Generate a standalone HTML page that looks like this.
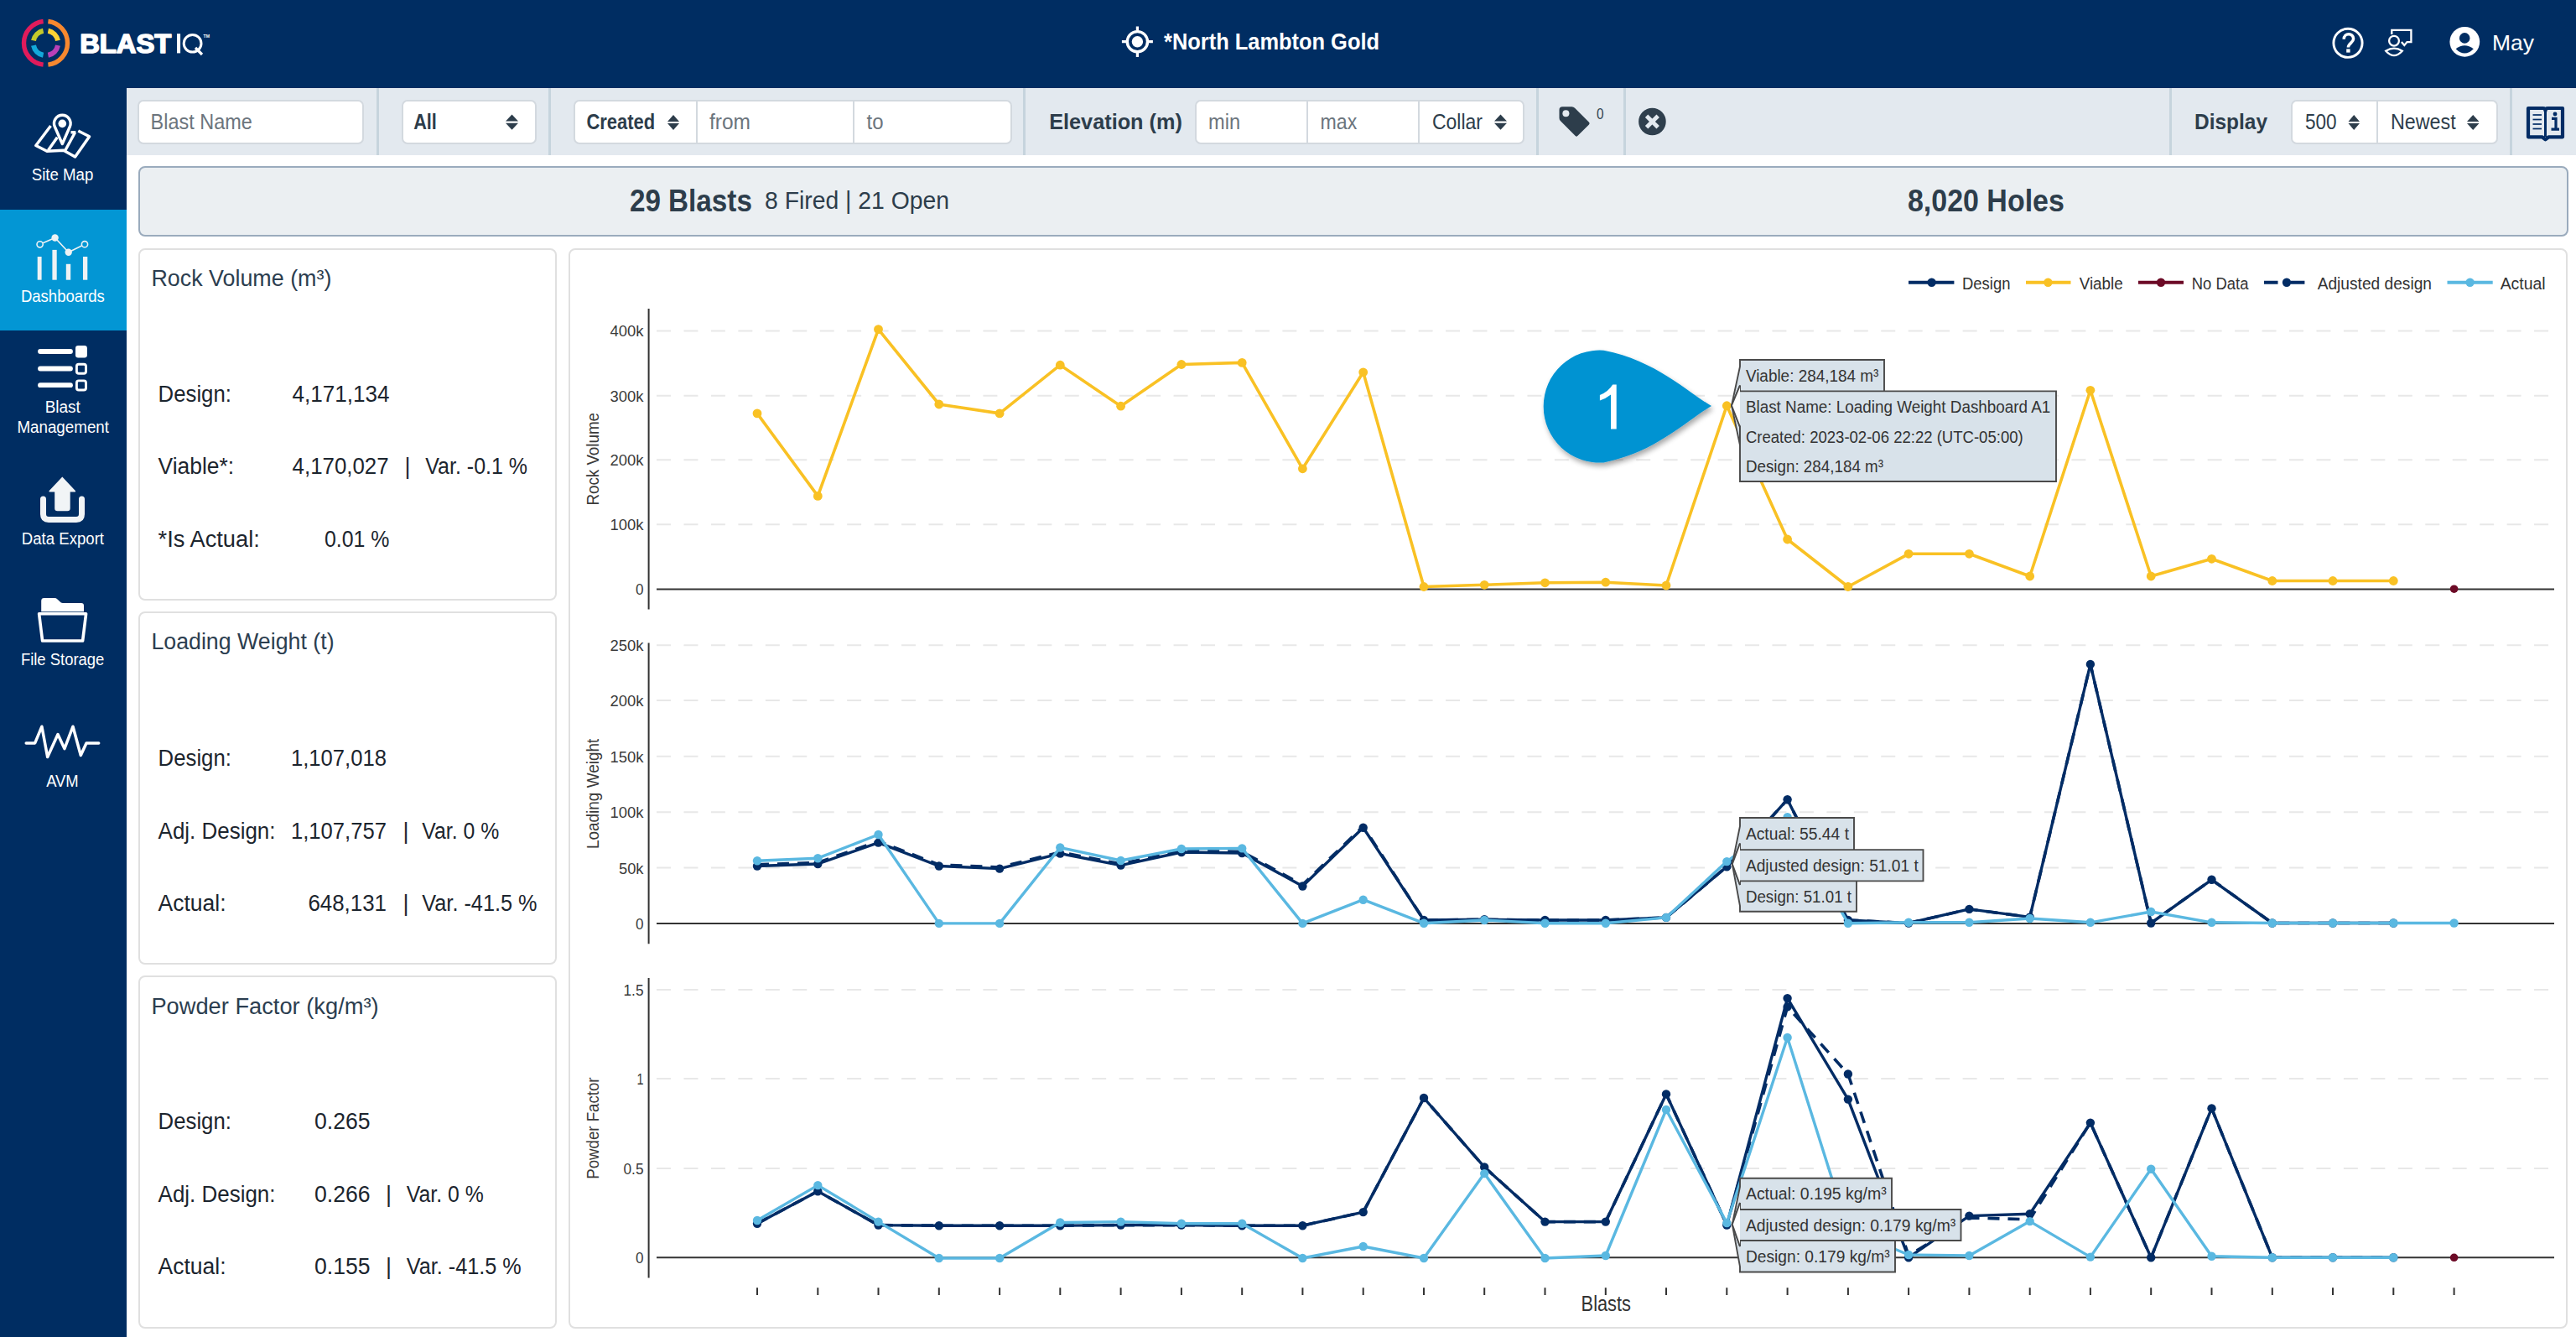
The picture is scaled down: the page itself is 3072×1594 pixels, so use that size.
<!DOCTYPE html>
<html><head><meta charset="utf-8"><title>BlastIQ Dashboards</title>
<style>
html,body{margin:0;padding:0;}
body{width:3072px;height:1594px;overflow:hidden;position:relative;background:#fff;font-family:"Liberation Sans", sans-serif;}
.abs{position:absolute;box-sizing:border-box;}
#hdr{left:0;top:0;width:3072px;height:105px;background:#002d62;}
#side{left:0;top:105px;width:151px;height:1489px;background:#002d62;}
#act{left:0;top:250px;width:151px;height:144px;background:#0396d4;}
#fbar{left:151px;top:105px;width:2921px;height:80px;background:#e3e9ef;}
.sep{top:105px;width:3px;height:80px;background:#c6d4dd;}
.inp{background:#fff;border:2px solid #d3d9df;border-radius:7px;}
.vsep{width:2px;background:#d3d9df;}
#summ{left:164.5px;top:198px;width:2898px;height:84px;background:#ebeff2;border:2px solid #9aabbd;border-radius:8px;}
.card{background:#fff;border:2px solid #e0e0e0;border-radius:8px;}
svg{position:absolute;left:0;top:0;}
</style></head><body>
<div class="abs" id="hdr"></div>
<div class="abs" id="side"></div>
<div class="abs" id="act"></div>
<div class="abs" id="fbar"></div>
<div class="abs sep" style="left:449px"></div>
<div class="abs sep" style="left:654px"></div>
<div class="abs sep" style="left:1220px"></div>
<div class="abs sep" style="left:1832px"></div>
<div class="abs sep" style="left:1936px"></div>
<div class="abs sep" style="left:2587px"></div>
<div class="abs sep" style="left:2993px"></div>
<div class="abs inp" style="left:164px;top:119px;width:270px;height:53px"></div>
<div class="abs inp" style="left:479px;top:119px;width:161px;height:53px"></div>
<div class="abs inp" style="left:684px;top:119px;width:523px;height:53px"></div>
<div class="abs vsep" style="left:830px;top:121px;height:49px"></div>
<div class="abs vsep" style="left:1017px;top:121px;height:49px"></div>
<div class="abs inp" style="left:1425px;top:119px;width:393px;height:53px"></div>
<div class="abs vsep" style="left:1558px;top:121px;height:49px"></div>
<div class="abs vsep" style="left:1691px;top:121px;height:49px"></div>
<div class="abs inp" style="left:2732px;top:119px;width:247px;height:53px"></div>
<div class="abs vsep" style="left:2834px;top:121px;height:49px"></div>
<div class="abs" id="summ"></div>
<div class="abs card" style="left:165px;top:296px;width:499px;height:420px"></div>
<div class="abs card" style="left:165px;top:729px;width:499px;height:421px"></div>
<div class="abs card" style="left:165px;top:1163px;width:499px;height:421px"></div>
<div class="abs card" style="left:678px;top:296px;width:2384px;height:1288px"></div>

<svg width="3072" height="1594" viewBox="0 0 3072 1594" font-family='"Liberation Sans", sans-serif'>
<path d="M57.40,25.46 A26.0,26.0 0 0 1 57.40,77.14" fill="none" stroke="#f7882f" stroke-width="5.4"/>
<path d="M51.60,77.14 A26.0,26.0 0 0 1 51.60,25.46" fill="none" stroke="#e11b5b" stroke-width="5.4"/>
<path d="M57.40,36.79 A14.8,14.8 0 0 1 69.01,48.40" fill="none" stroke="#fdd334" stroke-width="6"/>
<path d="M69.01,54.20 A14.8,14.8 0 0 1 57.40,65.81" fill="none" stroke="#b940b8" stroke-width="6"/>
<path d="M51.60,65.81 A14.8,14.8 0 0 1 39.99,54.20" fill="none" stroke="#13a8da" stroke-width="6"/>
<path d="M39.99,48.40 A14.8,14.8 0 0 1 51.60,36.79" fill="none" stroke="#c5c92b" stroke-width="6"/>
<text x="95.2" y="62.8" font-size="31.0" font-weight="bold" fill="#fff" textLength="109.2" lengthAdjust="spacingAndGlyphs" stroke="#fff" stroke-width="1.6" stroke-linejoin="round">BLAST</text>
<rect x="211" y="40.2" width="4.1" height="23.2" fill="#fff"/>
<ellipse cx="229.6" cy="51.8" rx="10.4" ry="10.3" fill="none" stroke="#fff" stroke-width="3"/>
<path d="M233,57 L241,65" stroke="#fff" stroke-width="3.2"/>
<text x="242.5" y="45.0" font-size="5.5" font-weight="bold" fill="#fff" textLength="7.5" lengthAdjust="spacingAndGlyphs">TM</text>
<circle cx="1356.4" cy="49.7" r="12.1" fill="none" stroke="#fff" stroke-width="3.4"/>
<circle cx="1356.4" cy="49.7" r="6.7" fill="#fff"/>
<path d="M1356.4,31.5 V36.5 M1356.4,62.9 V67.9 M1337.9,49.7 H1343 M1369.8,49.7 H1374.9" stroke="#fff" stroke-width="3.2"/>
<text x="1388.0" y="59.3" font-size="28.0" font-weight="bold" fill="#fff" textLength="257.0" lengthAdjust="spacingAndGlyphs">*North Lambton Gold</text>
<circle cx="2800" cy="51.3" r="17.1" fill="none" stroke="#fff" stroke-width="2.9"/>
<path d="M2795.2,46.8 C2795.2,38.8 2806.6,38.8 2806.6,46.3 C2806.6,50.8 2800.4,51.5 2800.4,56.6" fill="none" stroke="#fff" stroke-width="3.5"/>
<rect x="2798.2" y="58.4" width="4.4" height="4.2" fill="#fff"/>
<path d="M2852.3,41 V35.8 H2875.4 V50.1 H2870.5 L2867.3,54 L2863.9,50" fill="none" stroke="#fff" stroke-width="2.3"/>
<circle cx="2855" cy="48.7" r="5.9" fill="none" stroke="#fff" stroke-width="2.3"/>
<path d="M2845.2,60.8 Q2855,54.6 2864.8,60.8 Q2855,71.6 2845.2,60.8 Z" fill="none" stroke="#fff" stroke-width="2.3"/>
<circle cx="2939.3" cy="49.8" r="17.9" fill="#fff"/>
<circle cx="2939.2" cy="45.4" r="6.3" fill="#002d62"/>
<path d="M2928.6,58.2 Q2939.2,50.5 2949.8,58.2 Q2939.2,69 2928.6,58.2 Z" fill="#002d62"/>
<text x="2972.0" y="59.5" font-size="26.5" fill="#fff" textLength="50.0" lengthAdjust="spacingAndGlyphs">May</text>
<path d="M60.5,150 L42.8,173.6 L56,180.2 L75.8,179.3 L89.6,187 L106.6,162.8 L93.3,156" fill="none" stroke="#fff" stroke-width="3.4" stroke-linejoin="round"/>
<path d="M57.4,179.2 L68.3,163.8 M77.6,179.6 L89.6,157.8 M84.5,157.8 H90.3" fill="none" stroke="#fff" stroke-width="3.4"/>
<path d="M74.3,171.6 L65.3,151.0 A9.8,9.8 0 1 1 83.3,151.0 Z" fill="#002d62" stroke="#fff" stroke-width="3.4" stroke-linejoin="round"/>
<circle cx="74.3" cy="147.4" r="4.8" fill="#fff"/>
<text x="37.7" y="214.6" font-size="20.0" fill="#ffffff" textLength="73.6" lengthAdjust="spacingAndGlyphs">Site Map</text>
<rect x="44.7" y="306" width="4.9" height="27.7" fill="#eef2f4"/>
<rect x="62.4" y="297.9" width="5.3" height="35.8" fill="#eef2f4"/>
<rect x="78.8" y="314.8" width="5.4" height="18.9" fill="#eef2f4"/>
<rect x="99" y="306" width="5.3" height="27.7" fill="#eef2f4"/>
<path d="M47.6,291.3 L65.6,283.5 L81.7,300.8 L101,291.2" fill="none" stroke="#eef2f4" stroke-width="1.6"/>
<circle cx="47.6" cy="291.3" r="3.6" fill="#0396d4" stroke="#eef2f4" stroke-width="1.6"/>
<circle cx="101" cy="291.2" r="3.6" fill="#0396d4" stroke="#eef2f4" stroke-width="1.6"/>
<circle cx="65.6" cy="283.5" r="4.2" fill="#eef2f4"/>
<circle cx="81.7" cy="300.8" r="4.2" fill="#eef2f4"/>
<text x="24.9" y="359.6" font-size="21.0" fill="#ffffff" textLength="100.0" lengthAdjust="spacingAndGlyphs">Dashboards</text>
<path d="M48,419 H84" stroke="#fff" stroke-width="5.8" stroke-linecap="round"/>
<path d="M48,439.5 H84" stroke="#fff" stroke-width="5.8" stroke-linecap="round"/>
<path d="M48,459.2 H84" stroke="#fff" stroke-width="5.8" stroke-linecap="round"/>
<rect x="90" y="412.1" width="13.9" height="14.4" rx="3.2" fill="#fff"/>
<rect x="91.4" y="434.2" width="11.1" height="11.1" rx="2.5" fill="none" stroke="#fff" stroke-width="2.9"/>
<rect x="91.4" y="453.9" width="11.1" height="11.1" rx="2.5" fill="none" stroke="#fff" stroke-width="2.9"/>
<text x="53.7" y="492.0" font-size="19.5" fill="#ffffff" textLength="42.2" lengthAdjust="spacingAndGlyphs">Blast</text>
<text x="20.4" y="516.2" font-size="19.5" fill="#ffffff" textLength="109.6" lengthAdjust="spacingAndGlyphs">Management</text>
<path d="M74.3,568.6 L58.5,585.3 Q58,586.5 59.5,586.5 H65.2 V606 Q65.2,609.3 68.5,609.3 H80.4 Q83.7,609.3 83.7,606 V586.5 H89.2 Q90.6,586.5 90,585.3 Z" fill="#f1f4f6"/>
<path d="M51.5,595 V613 Q51.5,619.4 58,619.4 H91 Q97.5,619.4 97.5,613 V595" fill="none" stroke="#f1f4f6" stroke-width="7" stroke-linecap="round"/>
<text x="25.8" y="648.8" font-size="20.0" fill="#ffffff" textLength="98.2" lengthAdjust="spacingAndGlyphs">Data Export</text>
<path d="M49.2,729.2 V716.5 Q49.2,713.1 52.6,713.1 H65 Q67,713.1 68.5,714.5 L72.5,718.2 Q73.5,719 75,719 H97 Q100,719 100,722.3 V729.2 Z" fill="#fff"/>
<path d="M46.6,731.8 H102.6 L98.6,764 H50.6 Z" fill="none" stroke="#fff" stroke-width="3.6" stroke-linejoin="round"/>
<text x="24.9" y="793.1" font-size="20.0" fill="#ffffff" textLength="99.5" lengthAdjust="spacingAndGlyphs">File Storage</text>
<path d="M31.2,885.9 H41.7 L49.9,866.2 L56.7,902.6 L69,875.6 L76.9,892.6 L87,866.2 L96.3,900.5 L103,885.9 H117.7" fill="none" stroke="#fff" stroke-width="3.5" stroke-linejoin="round" stroke-linecap="round"/>
<text x="55.2" y="937.5" font-size="20.0" fill="#ffffff" textLength="38.5" lengthAdjust="spacingAndGlyphs">AVM</text>
<text x="179.6" y="153.9" font-size="25.0" fill="#6c757d" textLength="121.3" lengthAdjust="spacingAndGlyphs">Blast Name</text>
<text x="493.2" y="153.9" font-size="26.2" font-weight="bold" fill="#2d3d4b" textLength="27.7" lengthAdjust="spacingAndGlyphs">All</text>
<path d="M603,144.6 L610.5,136.6 L618,144.6 Z M603,146.8 L610.5,154.8 L618,146.8 Z" fill="#2d3d4b"/>
<text x="699.5" y="153.5" font-size="26.2" font-weight="bold" fill="#2d3d4b" textLength="81.6" lengthAdjust="spacingAndGlyphs">Created</text>
<path d="M796,144.9 L803.0,137 L810,144.9 Z M796,147.1 L803.0,155 L810,147.1 Z" fill="#2d3d4b"/>
<text x="846.0" y="153.5" font-size="25.0" fill="#6c757d" textLength="49.0" lengthAdjust="spacingAndGlyphs">from</text>
<text x="1033.6" y="153.5" font-size="25.0" fill="#6c757d" textLength="20.0" lengthAdjust="spacingAndGlyphs">to</text>
<text x="1251.2" y="153.9" font-size="26.2" font-weight="bold" fill="#2d3d4b" textLength="158.7" lengthAdjust="spacingAndGlyphs">Elevation (m)</text>
<text x="1441.0" y="153.9" font-size="25.0" fill="#6c757d" textLength="38.0" lengthAdjust="spacingAndGlyphs">min</text>
<text x="1574.6" y="153.9" font-size="25.0" fill="#6c757d" textLength="43.7" lengthAdjust="spacingAndGlyphs">max</text>
<text x="1708.0" y="153.9" font-size="25.0" fill="#2d3d4b" textLength="60.0" lengthAdjust="spacingAndGlyphs">Collar</text>
<path d="M1782,144.6 L1789.5,136.6 L1797,144.6 Z M1782,146.8 L1789.5,154.8 L1797,146.8 Z" fill="#2d3d4b"/>
<path d="M1859.5,131 Q1859.5,127.3 1863.2,127.3 H1874.5 Q1876.5,127.3 1878,128.8 L1895,145.8 Q1896.3,147.1 1895,148.4 L1881.3,162 Q1880,163.3 1878.7,162 L1861,144.3 Q1859.5,142.8 1859.5,140.8 Z" fill="#2d3d4b"/>
<circle cx="1867.4" cy="135.3" r="4" fill="#e3e9ef"/>
<text x="1904.0" y="141.5" font-size="17.5" fill="#2d3d4b" textLength="8.5" lengthAdjust="spacingAndGlyphs">0</text>
<circle cx="1970.4" cy="145" r="16.3" fill="#2f3f4d"/>
<path d="M1963.6,138.2 L1977.2,151.8 M1977.2,138.2 L1963.6,151.8" stroke="#e3e9ef" stroke-width="4.8"/>
<text x="2617.0" y="153.7" font-size="26.2" font-weight="bold" fill="#2d3d4b" textLength="87.0" lengthAdjust="spacingAndGlyphs">Display</text>
<text x="2749.0" y="153.7" font-size="25.0" fill="#2d3d4b" textLength="37.6" lengthAdjust="spacingAndGlyphs">500</text>
<path d="M2800.5,144.9 L2807.2,137 L2814,144.9 Z M2800.5,147.1 L2807.2,155 L2814,147.1 Z" fill="#2d3d4b"/>
<text x="2851.0" y="153.7" font-size="25.0" fill="#2d3d4b" textLength="77.7" lengthAdjust="spacingAndGlyphs">Newest</text>
<path d="M2942,144.9 L2949.2,137 L2956.5,144.9 Z M2942,147.1 L2949.2,155 L2956.5,147.1 Z" fill="#2d3d4b"/>
<path d="M3015,129 H3032.5 Q3035.5,129 3035.5,132 Q3035.5,129 3038.5,129 H3056 V163.3 H3039.5 L3035.5,166.3 L3031.5,163.3 H3015 Z" fill="none" stroke="#022c65" stroke-width="4.2" stroke-linejoin="round"/>
<path d="M3035.5,132 V163" stroke="#022c65" stroke-width="3"/>
<path d="M3020.5,137 H3031" stroke="#022c65" stroke-width="1.7"/>
<path d="M3020.5,142.5 H3031" stroke="#022c65" stroke-width="1.7"/>
<path d="M3020.5,148 H3031" stroke="#022c65" stroke-width="1.7"/>
<path d="M3020.5,153.5 H3031" stroke="#022c65" stroke-width="1.7"/>
<circle cx="3047" cy="136" r="2.4" fill="#022c65"/>
<path d="M3043,141.3 H3048 V154 M3042.5,154.2 H3052" stroke="#022c65" stroke-width="3.2" fill="none"/>
<text x="750.9" y="251.7" font-size="36.5" font-weight="bold" fill="#2d3d4b" textLength="146.0" lengthAdjust="spacingAndGlyphs">29 Blasts</text>
<text x="912.0" y="248.6" font-size="29.5" fill="#2d3d4b" textLength="220.0" lengthAdjust="spacingAndGlyphs">8 Fired | 21 Open</text>
<text x="2274.9" y="251.6" font-size="36.5" font-weight="bold" fill="#2d3d4b" textLength="187.0" lengthAdjust="spacingAndGlyphs">8,020 Holes</text>
<text x="180.4" y="341.0" font-size="27.0" fill="#2c3e50" textLength="215.0" lengthAdjust="spacingAndGlyphs">Rock Volume (m³)</text>
<text x="188.6" y="479.3" font-size="27.0" fill="#1c252e" textLength="87.3" lengthAdjust="spacingAndGlyphs">Design:</text>
<text x="348.6" y="479.3" font-size="27.0" fill="#1c252e" textLength="116.0" lengthAdjust="spacingAndGlyphs">4,171,134</text>
<text x="188.6" y="564.9" font-size="27.0" fill="#1c252e" textLength="90.6" lengthAdjust="spacingAndGlyphs">Viable*:</text>
<text x="348.6" y="564.9" font-size="27.0" fill="#1c252e" textLength="115.0" lengthAdjust="spacingAndGlyphs">4,170,027</text>
<text x="482.5" y="564.9" font-size="27.0" fill="#1c252e">|</text>
<text x="507.3" y="564.9" font-size="27.0" fill="#1c252e" textLength="121.7" lengthAdjust="spacingAndGlyphs">Var. -0.1 %</text>
<text x="188.6" y="652.0" font-size="27.0" fill="#1c252e" textLength="121.2" lengthAdjust="spacingAndGlyphs">*Is Actual:</text>
<text x="387.0" y="652.0" font-size="27.0" fill="#1c252e" textLength="77.5" lengthAdjust="spacingAndGlyphs">0.01 %</text>
<text x="180.4" y="774.3" font-size="27.0" fill="#2c3e50" textLength="218.2" lengthAdjust="spacingAndGlyphs">Loading Weight (t)</text>
<text x="188.6" y="912.6" font-size="27.0" fill="#1c252e" textLength="87.3" lengthAdjust="spacingAndGlyphs">Design:</text>
<text x="347.0" y="912.6" font-size="27.0" fill="#1c252e" textLength="114.0" lengthAdjust="spacingAndGlyphs">1,107,018</text>
<text x="188.6" y="999.8" font-size="27.0" fill="#1c252e" textLength="139.9" lengthAdjust="spacingAndGlyphs">Adj. Design:</text>
<text x="347.0" y="999.8" font-size="27.0" fill="#1c252e" textLength="114.0" lengthAdjust="spacingAndGlyphs">1,107,757</text>
<text x="480.5" y="999.8" font-size="27.0" fill="#1c252e">|</text>
<text x="503.3" y="999.8" font-size="27.0" fill="#1c252e" textLength="91.9" lengthAdjust="spacingAndGlyphs">Var. 0 %</text>
<text x="188.6" y="1086.0" font-size="27.0" fill="#1c252e" textLength="81.0" lengthAdjust="spacingAndGlyphs">Actual:</text>
<text x="367.4" y="1086.0" font-size="27.0" fill="#1c252e" textLength="93.6" lengthAdjust="spacingAndGlyphs">648,131</text>
<text x="480.5" y="1086.0" font-size="27.0" fill="#1c252e">|</text>
<text x="503.3" y="1086.0" font-size="27.0" fill="#1c252e" textLength="137.3" lengthAdjust="spacingAndGlyphs">Var. -41.5 %</text>
<text x="180.4" y="1209.0" font-size="27.0" fill="#2c3e50" textLength="271.2" lengthAdjust="spacingAndGlyphs">Powder Factor (kg/m³)</text>
<text x="188.6" y="1346.0" font-size="27.0" fill="#1c252e" textLength="87.3" lengthAdjust="spacingAndGlyphs">Design:</text>
<text x="375.0" y="1346.0" font-size="27.0" fill="#1c252e" textLength="66.6" lengthAdjust="spacingAndGlyphs">0.265</text>
<text x="188.6" y="1433.0" font-size="27.0" fill="#1c252e" textLength="139.9" lengthAdjust="spacingAndGlyphs">Adj. Design:</text>
<text x="375.0" y="1433.0" font-size="27.0" fill="#1c252e" textLength="66.6" lengthAdjust="spacingAndGlyphs">0.266</text>
<text x="460.0" y="1433.0" font-size="27.0" fill="#1c252e">|</text>
<text x="484.8" y="1433.0" font-size="27.0" fill="#1c252e" textLength="91.9" lengthAdjust="spacingAndGlyphs">Var. 0 %</text>
<text x="188.6" y="1519.0" font-size="27.0" fill="#1c252e" textLength="81.0" lengthAdjust="spacingAndGlyphs">Actual:</text>
<text x="375.0" y="1519.0" font-size="27.0" fill="#1c252e" textLength="66.6" lengthAdjust="spacingAndGlyphs">0.155</text>
<text x="460.0" y="1519.0" font-size="27.0" fill="#1c252e">|</text>
<text x="484.8" y="1519.0" font-size="27.0" fill="#1c252e" textLength="136.8" lengthAdjust="spacingAndGlyphs">Var. -41.5 %</text>
<path d="M773.6,368 V726.4" stroke="#333333" stroke-width="2"/>
<path d="M783,394.5 H3040" stroke="#e8e8e8" stroke-width="2" stroke-dasharray="17,15.45"/>
<path d="M783,471.7 H3040" stroke="#e8e8e8" stroke-width="2" stroke-dasharray="17,15.45"/>
<path d="M783,548.3 H3040" stroke="#e8e8e8" stroke-width="2" stroke-dasharray="17,15.45"/>
<path d="M783,625.2 H3040" stroke="#e8e8e8" stroke-width="2" stroke-dasharray="17,15.45"/>
<path d="M783,702.4 H3046" stroke="#333333" stroke-width="2"/>
<text x="767.5" y="401.4" font-size="19.2" text-anchor="end" fill="#3a3a3a" textLength="40.0" lengthAdjust="spacingAndGlyphs">400k</text>
<text x="767.5" y="478.6" font-size="19.2" text-anchor="end" fill="#3a3a3a" textLength="40.0" lengthAdjust="spacingAndGlyphs">300k</text>
<text x="767.5" y="555.2" font-size="19.2" text-anchor="end" fill="#3a3a3a" textLength="40.0" lengthAdjust="spacingAndGlyphs">200k</text>
<text x="767.5" y="632.1" font-size="19.2" text-anchor="end" fill="#3a3a3a" textLength="40.0" lengthAdjust="spacingAndGlyphs">100k</text>
<text x="767.5" y="709.3" font-size="19.2" text-anchor="end" fill="#3a3a3a" textLength="9.5" lengthAdjust="spacingAndGlyphs">0</text>
<text x="0" y="0" font-size="20.5" fill="#3a3a3a" text-anchor="middle" textLength="110.6" lengthAdjust="spacingAndGlyphs" transform="translate(713.5,547.3) rotate(-90)">Rock Volume</text>
<path d="M773.6,766.6 V1125.3" stroke="#333333" stroke-width="2"/>
<path d="M783,769.2 H3040" stroke="#e8e8e8" stroke-width="2" stroke-dasharray="17,15.45"/>
<path d="M783,835.1 H3040" stroke="#e8e8e8" stroke-width="2" stroke-dasharray="17,15.45"/>
<path d="M783,901.7 H3040" stroke="#e8e8e8" stroke-width="2" stroke-dasharray="17,15.45"/>
<path d="M783,968.3 H3040" stroke="#e8e8e8" stroke-width="2" stroke-dasharray="17,15.45"/>
<path d="M783,1034.6 H3040" stroke="#e8e8e8" stroke-width="2" stroke-dasharray="17,15.45"/>
<path d="M783,1101.0 H3046" stroke="#333333" stroke-width="2"/>
<text x="767.5" y="776.1" font-size="19.2" text-anchor="end" fill="#3a3a3a" textLength="40.0" lengthAdjust="spacingAndGlyphs">250k</text>
<text x="767.5" y="842.0" font-size="19.2" text-anchor="end" fill="#3a3a3a" textLength="40.0" lengthAdjust="spacingAndGlyphs">200k</text>
<text x="767.5" y="908.6" font-size="19.2" text-anchor="end" fill="#3a3a3a" textLength="40.0" lengthAdjust="spacingAndGlyphs">150k</text>
<text x="767.5" y="975.2" font-size="19.2" text-anchor="end" fill="#3a3a3a" textLength="40.0" lengthAdjust="spacingAndGlyphs">100k</text>
<text x="767.5" y="1041.5" font-size="19.2" text-anchor="end" fill="#3a3a3a" textLength="29.5" lengthAdjust="spacingAndGlyphs">50k</text>
<text x="767.5" y="1107.9" font-size="19.2" text-anchor="end" fill="#3a3a3a" textLength="9.5" lengthAdjust="spacingAndGlyphs">0</text>
<text x="0" y="0" font-size="20.5" fill="#3a3a3a" text-anchor="middle" textLength="131.2" lengthAdjust="spacingAndGlyphs" transform="translate(713.5,946.4) rotate(-90)">Loading Weight</text>
<path d="M773.6,1166 V1523.6" stroke="#333333" stroke-width="2"/>
<path d="M783,1179.9 H3040" stroke="#e8e8e8" stroke-width="2" stroke-dasharray="17,15.45"/>
<path d="M783,1286.1 H3040" stroke="#e8e8e8" stroke-width="2" stroke-dasharray="17,15.45"/>
<path d="M783,1393.0 H3040" stroke="#e8e8e8" stroke-width="2" stroke-dasharray="17,15.45"/>
<path d="M783,1499.3 H3046" stroke="#333333" stroke-width="2"/>
<text x="767.5" y="1186.8" font-size="19.2" text-anchor="end" fill="#3a3a3a" textLength="24.0" lengthAdjust="spacingAndGlyphs">1.5</text>
<text x="767.5" y="1293.0" font-size="19.2" text-anchor="end" fill="#3a3a3a" textLength="8.0" lengthAdjust="spacingAndGlyphs">1</text>
<text x="767.5" y="1399.9" font-size="19.2" text-anchor="end" fill="#3a3a3a" textLength="24.0" lengthAdjust="spacingAndGlyphs">0.5</text>
<text x="767.5" y="1506.2" font-size="19.2" text-anchor="end" fill="#3a3a3a" textLength="9.5" lengthAdjust="spacingAndGlyphs">0</text>
<text x="0" y="0" font-size="20.5" fill="#3a3a3a" text-anchor="middle" textLength="121.3" lengthAdjust="spacingAndGlyphs" transform="translate(713.5,1345.1) rotate(-90)">Powder Factor</text>
<path d="M903.0,1535.3 V1543.9 M975.3,1535.3 V1543.9 M1047.5,1535.3 V1543.9 M1119.8,1535.3 V1543.9 M1192.1,1535.3 V1543.9 M1264.3,1535.3 V1543.9 M1336.6,1535.3 V1543.9 M1408.9,1535.3 V1543.9 M1481.2,1535.3 V1543.9 M1553.4,1535.3 V1543.9 M1625.7,1535.3 V1543.9 M1698.0,1535.3 V1543.9 M1770.2,1535.3 V1543.9 M1842.5,1535.3 V1543.9 M1914.8,1535.3 V1543.9 M1987.0,1535.3 V1543.9 M2059.3,1535.3 V1543.9 M2131.6,1535.3 V1543.9 M2203.9,1535.3 V1543.9 M2276.1,1535.3 V1543.9 M2348.4,1535.3 V1543.9 M2420.7,1535.3 V1543.9 M2492.9,1535.3 V1543.9 M2565.2,1535.3 V1543.9 M2637.5,1535.3 V1543.9 M2709.8,1535.3 V1543.9 M2782.0,1535.3 V1543.9 M2854.3,1535.3 V1543.9 M2926.6,1535.3 V1543.9" stroke="#333333" stroke-width="2"/>
<text x="1885.6" y="1562.5" font-size="25.5" fill="#333" textLength="59.4" lengthAdjust="spacingAndGlyphs">Blasts</text>
<path d="M903.0,492.9 L975.3,591.4 L1047.5,392.6 L1119.8,482.0 L1192.1,492.9 L1264.3,435.2 L1336.6,484.2 L1408.9,434.5 L1481.2,432.4 L1553.4,558.8 L1625.7,443.8 L1698.0,699.5 L1770.2,697.3 L1842.5,694.8 L1914.8,694.2 L1987.0,698.0 L2059.3,483.7 L2131.6,643.0 L2203.9,699.5 L2276.1,660.3 L2348.4,660.3 L2420.7,687.0 L2492.9,465.3 L2565.2,687.0 L2637.5,666.3 L2709.8,692.5 L2782.0,692.5 L2854.3,692.5" fill="none" stroke="#f9c124" stroke-width="3.6" stroke-linejoin="round"/>
<circle cx="903.0" cy="492.9" r="5.4" fill="#f9c124"/>
<circle cx="975.3" cy="591.4" r="5.4" fill="#f9c124"/>
<circle cx="1047.5" cy="392.6" r="5.4" fill="#f9c124"/>
<circle cx="1119.8" cy="482.0" r="5.4" fill="#f9c124"/>
<circle cx="1192.1" cy="492.9" r="5.4" fill="#f9c124"/>
<circle cx="1264.3" cy="435.2" r="5.4" fill="#f9c124"/>
<circle cx="1336.6" cy="484.2" r="5.4" fill="#f9c124"/>
<circle cx="1408.9" cy="434.5" r="5.4" fill="#f9c124"/>
<circle cx="1481.2" cy="432.4" r="5.4" fill="#f9c124"/>
<circle cx="1553.4" cy="558.8" r="5.4" fill="#f9c124"/>
<circle cx="1625.7" cy="443.8" r="5.4" fill="#f9c124"/>
<circle cx="1698.0" cy="699.5" r="5.4" fill="#f9c124"/>
<circle cx="1770.2" cy="697.3" r="5.4" fill="#f9c124"/>
<circle cx="1842.5" cy="694.8" r="5.4" fill="#f9c124"/>
<circle cx="1914.8" cy="694.2" r="5.4" fill="#f9c124"/>
<circle cx="1987.0" cy="698.0" r="5.4" fill="#f9c124"/>
<circle cx="2059.3" cy="483.7" r="5.4" fill="#f9c124"/>
<circle cx="2131.6" cy="643.0" r="5.4" fill="#f9c124"/>
<circle cx="2203.9" cy="699.5" r="5.4" fill="#f9c124"/>
<circle cx="2276.1" cy="660.3" r="5.4" fill="#f9c124"/>
<circle cx="2348.4" cy="660.3" r="5.4" fill="#f9c124"/>
<circle cx="2420.7" cy="687.0" r="5.4" fill="#f9c124"/>
<circle cx="2492.9" cy="465.3" r="5.4" fill="#f9c124"/>
<circle cx="2565.2" cy="687.0" r="5.4" fill="#f9c124"/>
<circle cx="2637.5" cy="666.3" r="5.4" fill="#f9c124"/>
<circle cx="2709.8" cy="692.5" r="5.4" fill="#f9c124"/>
<circle cx="2782.0" cy="692.5" r="5.4" fill="#f9c124"/>
<circle cx="2854.3" cy="692.5" r="5.4" fill="#f9c124"/>
<circle cx="2926.6" cy="702.2" r="4.8" fill="#6c0a26"/>
<path d="M903.0,1032.5 L975.3,1030.0 L1047.5,1004.6 L1119.8,1032.5 L1192.1,1035.6 L1264.3,1017.6 L1336.6,1031.6 L1408.9,1016.0 L1481.2,1017.0 L1553.4,1056.5 L1625.7,986.7 L1698.0,1097.0 L1770.2,1096.3 L1842.5,1097.0 L1914.8,1097.0 L1987.0,1093.9 L2059.3,1033.3 L2131.6,953.2 L2203.9,1097.0 L2276.1,1100.6 L2348.4,1083.9 L2420.7,1093.4 L2492.9,791.9 L2565.2,1100.5 L2637.5,1048.8 L2709.8,1100.5 L2782.0,1100.5 L2854.3,1100.5" fill="none" stroke="#022c65" stroke-width="3.4" stroke-linejoin="round"/>
<circle cx="903.0" cy="1032.5" r="5.2" fill="#022c65"/>
<circle cx="975.3" cy="1030.0" r="5.2" fill="#022c65"/>
<circle cx="1047.5" cy="1004.6" r="5.2" fill="#022c65"/>
<circle cx="1119.8" cy="1032.5" r="5.2" fill="#022c65"/>
<circle cx="1192.1" cy="1035.6" r="5.2" fill="#022c65"/>
<circle cx="1264.3" cy="1017.6" r="5.2" fill="#022c65"/>
<circle cx="1336.6" cy="1031.6" r="5.2" fill="#022c65"/>
<circle cx="1408.9" cy="1016.0" r="5.2" fill="#022c65"/>
<circle cx="1481.2" cy="1017.0" r="5.2" fill="#022c65"/>
<circle cx="1553.4" cy="1056.5" r="5.2" fill="#022c65"/>
<circle cx="1625.7" cy="986.7" r="5.2" fill="#022c65"/>
<circle cx="1698.0" cy="1097.0" r="5.2" fill="#022c65"/>
<circle cx="1770.2" cy="1096.3" r="5.2" fill="#022c65"/>
<circle cx="1842.5" cy="1097.0" r="5.2" fill="#022c65"/>
<circle cx="1914.8" cy="1097.0" r="5.2" fill="#022c65"/>
<circle cx="1987.0" cy="1093.9" r="5.2" fill="#022c65"/>
<circle cx="2059.3" cy="1033.3" r="5.2" fill="#022c65"/>
<circle cx="2131.6" cy="953.2" r="5.2" fill="#022c65"/>
<circle cx="2203.9" cy="1097.0" r="5.2" fill="#022c65"/>
<circle cx="2276.1" cy="1100.6" r="5.2" fill="#022c65"/>
<circle cx="2348.4" cy="1083.9" r="5.2" fill="#022c65"/>
<circle cx="2420.7" cy="1093.4" r="5.2" fill="#022c65"/>
<circle cx="2492.9" cy="791.9" r="5.2" fill="#022c65"/>
<circle cx="2565.2" cy="1100.5" r="5.2" fill="#022c65"/>
<circle cx="2637.5" cy="1048.8" r="5.2" fill="#022c65"/>
<circle cx="2709.8" cy="1100.5" r="5.2" fill="#022c65"/>
<circle cx="2782.0" cy="1100.5" r="5.2" fill="#022c65"/>
<circle cx="2854.3" cy="1100.5" r="5.2" fill="#022c65"/>
<path d="M903.0,1030.9 L975.3,1028.4 L1047.5,1003.0 L1119.8,1030.9 L1192.1,1034.0 L1264.3,1016.0 L1336.6,1030.0 L1408.9,1014.4 L1481.2,1015.4 L1553.4,1054.9 L1625.7,985.1 L1698.0,1097.0 L1770.2,1096.3 L1842.5,1097.0 L1914.8,1097.0 L1987.0,1093.9 L2059.3,1033.3 L2131.6,953.2 L2203.9,1097.0 L2276.1,1100.6 L2348.4,1083.9 L2420.7,1093.4 L2492.9,791.9 L2565.2,1100.5 L2637.5,1048.8 L2709.8,1100.5 L2782.0,1100.5 L2854.3,1100.5" fill="none" stroke="#022c65" stroke-width="3.6" stroke-linejoin="round" stroke-dasharray="14,10"/>
<path d="M903.0,1026.3 L975.3,1023.2 L1047.5,995.0 L1119.8,1100.9 L1192.1,1100.9 L1264.3,1010.5 L1336.6,1026.0 L1408.9,1012.0 L1481.2,1011.4 L1553.4,1100.9 L1625.7,1072.7 L1698.0,1100.7 L1770.2,1097.0 L1842.5,1100.7 L1914.8,1100.7 L1987.0,1093.9 L2059.3,1027.1 L2131.6,974.3 L2203.9,1100.7 L2276.1,1099.8 L2348.4,1099.8 L2420.7,1095.0 L2492.9,1099.8 L2565.2,1087.0 L2637.5,1099.8 L2709.8,1100.5 L2782.0,1100.5 L2854.3,1100.5 L2926.6,1100.5" fill="none" stroke="#5ab8e1" stroke-width="3.4" stroke-linejoin="round"/>
<circle cx="903.0" cy="1026.3" r="5.2" fill="#5ab8e1"/>
<circle cx="975.3" cy="1023.2" r="5.2" fill="#5ab8e1"/>
<circle cx="1047.5" cy="995.0" r="5.2" fill="#5ab8e1"/>
<circle cx="1119.8" cy="1100.9" r="5.2" fill="#5ab8e1"/>
<circle cx="1192.1" cy="1100.9" r="5.2" fill="#5ab8e1"/>
<circle cx="1264.3" cy="1010.5" r="5.2" fill="#5ab8e1"/>
<circle cx="1336.6" cy="1026.0" r="5.2" fill="#5ab8e1"/>
<circle cx="1408.9" cy="1012.0" r="5.2" fill="#5ab8e1"/>
<circle cx="1481.2" cy="1011.4" r="5.2" fill="#5ab8e1"/>
<circle cx="1553.4" cy="1100.9" r="5.2" fill="#5ab8e1"/>
<circle cx="1625.7" cy="1072.7" r="5.2" fill="#5ab8e1"/>
<circle cx="1698.0" cy="1100.7" r="5.2" fill="#5ab8e1"/>
<circle cx="1770.2" cy="1097.0" r="5.2" fill="#5ab8e1"/>
<circle cx="1842.5" cy="1100.7" r="5.2" fill="#5ab8e1"/>
<circle cx="1914.8" cy="1100.7" r="5.2" fill="#5ab8e1"/>
<circle cx="1987.0" cy="1093.9" r="5.2" fill="#5ab8e1"/>
<circle cx="2059.3" cy="1027.1" r="5.2" fill="#5ab8e1"/>
<circle cx="2131.6" cy="974.3" r="5.2" fill="#5ab8e1"/>
<circle cx="2203.9" cy="1100.7" r="5.2" fill="#5ab8e1"/>
<circle cx="2276.1" cy="1099.8" r="5.2" fill="#5ab8e1"/>
<circle cx="2348.4" cy="1099.8" r="5.2" fill="#5ab8e1"/>
<circle cx="2420.7" cy="1095.0" r="5.2" fill="#5ab8e1"/>
<circle cx="2492.9" cy="1099.8" r="5.2" fill="#5ab8e1"/>
<circle cx="2565.2" cy="1087.0" r="5.2" fill="#5ab8e1"/>
<circle cx="2637.5" cy="1099.8" r="5.2" fill="#5ab8e1"/>
<circle cx="2709.8" cy="1100.5" r="5.2" fill="#5ab8e1"/>
<circle cx="2782.0" cy="1100.5" r="5.2" fill="#5ab8e1"/>
<circle cx="2854.3" cy="1100.5" r="5.2" fill="#5ab8e1"/>
<circle cx="2926.6" cy="1100.5" r="5.2" fill="#5ab8e1"/>
<path d="M903.0,1458.8 L975.3,1420.2 L1047.5,1460.6 L1119.8,1461.2 L1192.1,1461.2 L1264.3,1461.2 L1336.6,1460.6 L1408.9,1460.6 L1481.2,1461.2 L1553.4,1461.2 L1625.7,1445.1 L1698.0,1309.0 L1770.2,1391.4 L1842.5,1456.6 L1914.8,1456.6 L1987.0,1304.4 L2059.3,1460.6 L2131.6,1190.1 L2203.9,1310.6 L2276.1,1499.3 L2348.4,1449.6 L2420.7,1447.3 L2492.9,1338.6 L2565.2,1499.3 L2637.5,1321.4 L2709.8,1499.3 L2782.0,1499.3 L2854.3,1499.3" fill="none" stroke="#022c65" stroke-width="3.4" stroke-linejoin="round"/>
<circle cx="903.0" cy="1458.8" r="5.2" fill="#022c65"/>
<circle cx="975.3" cy="1420.2" r="5.2" fill="#022c65"/>
<circle cx="1047.5" cy="1460.6" r="5.2" fill="#022c65"/>
<circle cx="1119.8" cy="1461.2" r="5.2" fill="#022c65"/>
<circle cx="1192.1" cy="1461.2" r="5.2" fill="#022c65"/>
<circle cx="1264.3" cy="1461.2" r="5.2" fill="#022c65"/>
<circle cx="1336.6" cy="1460.6" r="5.2" fill="#022c65"/>
<circle cx="1408.9" cy="1460.6" r="5.2" fill="#022c65"/>
<circle cx="1481.2" cy="1461.2" r="5.2" fill="#022c65"/>
<circle cx="1553.4" cy="1461.2" r="5.2" fill="#022c65"/>
<circle cx="1625.7" cy="1445.1" r="5.2" fill="#022c65"/>
<circle cx="1698.0" cy="1309.0" r="5.2" fill="#022c65"/>
<circle cx="1770.2" cy="1391.4" r="5.2" fill="#022c65"/>
<circle cx="1842.5" cy="1456.6" r="5.2" fill="#022c65"/>
<circle cx="1914.8" cy="1456.6" r="5.2" fill="#022c65"/>
<circle cx="1987.0" cy="1304.4" r="5.2" fill="#022c65"/>
<circle cx="2059.3" cy="1460.6" r="5.2" fill="#022c65"/>
<circle cx="2131.6" cy="1190.1" r="5.2" fill="#022c65"/>
<circle cx="2203.9" cy="1310.6" r="5.2" fill="#022c65"/>
<circle cx="2276.1" cy="1499.3" r="5.2" fill="#022c65"/>
<circle cx="2348.4" cy="1449.6" r="5.2" fill="#022c65"/>
<circle cx="2420.7" cy="1447.3" r="5.2" fill="#022c65"/>
<circle cx="2492.9" cy="1338.6" r="5.2" fill="#022c65"/>
<circle cx="2565.2" cy="1499.3" r="5.2" fill="#022c65"/>
<circle cx="2637.5" cy="1321.4" r="5.2" fill="#022c65"/>
<circle cx="2709.8" cy="1499.3" r="5.2" fill="#022c65"/>
<circle cx="2782.0" cy="1499.3" r="5.2" fill="#022c65"/>
<circle cx="2854.3" cy="1499.3" r="5.2" fill="#022c65"/>
<path d="M903.0,1458.8 L975.3,1420.2 L1047.5,1460.6 L1119.8,1461.2 L1192.1,1461.2 L1264.3,1461.2 L1336.6,1460.6 L1408.9,1460.6 L1481.2,1461.2 L1553.4,1461.2 L1625.7,1445.1 L1698.0,1309.0 L1770.2,1391.4 L1842.5,1456.6 L1914.8,1456.6 L1987.0,1304.4 L2059.3,1460.6 L2131.6,1200.4 L2203.9,1280.5 L2276.1,1497.0 L2348.4,1452.0 L2420.7,1453.8 L2492.9,1338.6 L2565.2,1499.3 L2637.5,1321.4 L2709.8,1499.3 L2782.0,1499.3 L2854.3,1499.3" fill="none" stroke="#022c65" stroke-width="3.6" stroke-linejoin="round" stroke-dasharray="14,10"/>
<circle cx="2131.6" cy="1200.4" r="5.2" fill="#022c65"/>
<circle cx="2203.9" cy="1280.5" r="5.2" fill="#022c65"/>
<path d="M903.0,1455.0 L975.3,1413.1 L1047.5,1456.6 L1119.8,1500.0 L1192.1,1500.0 L1264.3,1457.5 L1336.6,1456.6 L1408.9,1458.8 L1481.2,1458.8 L1553.4,1500.0 L1625.7,1486.0 L1698.0,1500.0 L1770.2,1399.1 L1842.5,1500.0 L1914.8,1497.0 L1987.0,1323.0 L2059.3,1458.1 L2131.6,1237.0 L2203.9,1466.0 L2276.1,1496.0 L2348.4,1497.0 L2420.7,1456.1 L2492.9,1498.6 L2565.2,1393.8 L2637.5,1497.7 L2709.8,1499.3 L2782.0,1499.3 L2854.3,1499.3" fill="none" stroke="#5ab8e1" stroke-width="3.4" stroke-linejoin="round"/>
<circle cx="903.0" cy="1455.0" r="5.2" fill="#5ab8e1"/>
<circle cx="975.3" cy="1413.1" r="5.2" fill="#5ab8e1"/>
<circle cx="1047.5" cy="1456.6" r="5.2" fill="#5ab8e1"/>
<circle cx="1119.8" cy="1500.0" r="5.2" fill="#5ab8e1"/>
<circle cx="1192.1" cy="1500.0" r="5.2" fill="#5ab8e1"/>
<circle cx="1264.3" cy="1457.5" r="5.2" fill="#5ab8e1"/>
<circle cx="1336.6" cy="1456.6" r="5.2" fill="#5ab8e1"/>
<circle cx="1408.9" cy="1458.8" r="5.2" fill="#5ab8e1"/>
<circle cx="1481.2" cy="1458.8" r="5.2" fill="#5ab8e1"/>
<circle cx="1553.4" cy="1500.0" r="5.2" fill="#5ab8e1"/>
<circle cx="1625.7" cy="1486.0" r="5.2" fill="#5ab8e1"/>
<circle cx="1698.0" cy="1500.0" r="5.2" fill="#5ab8e1"/>
<circle cx="1770.2" cy="1399.1" r="5.2" fill="#5ab8e1"/>
<circle cx="1842.5" cy="1500.0" r="5.2" fill="#5ab8e1"/>
<circle cx="1914.8" cy="1497.0" r="5.2" fill="#5ab8e1"/>
<circle cx="1987.0" cy="1323.0" r="5.2" fill="#5ab8e1"/>
<circle cx="2059.3" cy="1458.1" r="5.2" fill="#5ab8e1"/>
<circle cx="2131.6" cy="1237.0" r="5.2" fill="#5ab8e1"/>
<circle cx="2203.9" cy="1466.0" r="5.2" fill="#5ab8e1"/>
<circle cx="2276.1" cy="1496.0" r="5.2" fill="#5ab8e1"/>
<circle cx="2348.4" cy="1497.0" r="5.2" fill="#5ab8e1"/>
<circle cx="2420.7" cy="1456.1" r="5.2" fill="#5ab8e1"/>
<circle cx="2492.9" cy="1498.6" r="5.2" fill="#5ab8e1"/>
<circle cx="2565.2" cy="1393.8" r="5.2" fill="#5ab8e1"/>
<circle cx="2637.5" cy="1497.7" r="5.2" fill="#5ab8e1"/>
<circle cx="2709.8" cy="1499.3" r="5.2" fill="#5ab8e1"/>
<circle cx="2782.0" cy="1499.3" r="5.2" fill="#5ab8e1"/>
<circle cx="2854.3" cy="1499.3" r="5.2" fill="#5ab8e1"/>
<circle cx="2926.6" cy="1499.3" r="4.8" fill="#6c0a26"/>
<path d="M2276,336.7 H2330.4" stroke="#022c65" stroke-width="4"/>
<circle cx="2303.6" cy="336.7" r="5.2" fill="#022c65"/>
<text x="2340.0" y="345.3" font-size="20.5" fill="#333" textLength="57.4" lengthAdjust="spacingAndGlyphs">Design</text>
<path d="M2416,336.7 H2469.5" stroke="#f9c124" stroke-width="4"/>
<circle cx="2442.4" cy="336.7" r="5.2" fill="#f9c124"/>
<text x="2479.7" y="345.3" font-size="20.5" fill="#333" textLength="52.0" lengthAdjust="spacingAndGlyphs">Viable</text>
<path d="M2550,336.7 H2604" stroke="#6c0a26" stroke-width="4"/>
<circle cx="2577" cy="336.7" r="5.2" fill="#6c0a26"/>
<text x="2613.8" y="345.3" font-size="20.5" fill="#333" textLength="67.6" lengthAdjust="spacingAndGlyphs">No Data</text>
<path d="M2700,336.7 H2716.5 M2731.9,336.7 H2748.4" stroke="#022c65" stroke-width="4"/>
<circle cx="2727" cy="336.7" r="5.2" fill="#022c65"/>
<text x="2763.7" y="345.3" font-size="20.5" fill="#333" textLength="136.3" lengthAdjust="spacingAndGlyphs">Adjusted design</text>
<path d="M2918.5,336.7 H2972.7" stroke="#5ab8e1" stroke-width="4"/>
<circle cx="2945.6" cy="336.7" r="5.2" fill="#5ab8e1"/>
<text x="2981.7" y="345.3" font-size="20.5" fill="#333" textLength="53.9" lengthAdjust="spacingAndGlyphs">Actual</text>
<path d="M2075,429 H2247 V472 H2075 V530.7 L2065,483.5 L2075,437.0 Z" fill="#d8e2ea" stroke="#4a4a4a" stroke-width="1.9" stroke-linejoin="miter"/>
<text x="2081.9" y="455.0" font-size="20.5" fill="#333" textLength="158.5" lengthAdjust="spacingAndGlyphs">Viable: 284,184 m³</text>
<path d="M2075,466.4 H2452 V574 H2075 V509.0 L2065,483.5 L2075,459.5 Z" fill="#d8e2ea" stroke="#4a4a4a" stroke-width="1.9" stroke-linejoin="miter"/>
<path d="M2075,459.5 L2065,483.5 L2075,509.0" fill="#fff" stroke="#4a4a4a" stroke-width="1.9"/>
<text x="2081.9" y="492.4" font-size="20.5" fill="#333" textLength="363.4" lengthAdjust="spacingAndGlyphs">Blast Name: Loading Weight Dashboard A1</text>
<text x="2081.9" y="527.7" font-size="20.5" fill="#333" textLength="330.8" lengthAdjust="spacingAndGlyphs">Created: 2023-02-06 22:22 (UTC-05:00)</text>
<text x="2081.9" y="563.0" font-size="20.5" fill="#333" textLength="164.1" lengthAdjust="spacingAndGlyphs">Design: 284,184 m³</text>
<path d="M2075,975 H2211 V1020 H2075 V1018.0 L2065.8,1030.2 L2075,985.0 Z" fill="#d8e2ea" stroke="#4a4a4a" stroke-width="1.9" stroke-linejoin="miter"/>
<text x="2081.9" y="1000.7" font-size="20.5" fill="#333" textLength="123.1" lengthAdjust="spacingAndGlyphs">Actual: 55.44 t</text>
<path d="M2075,1045 H2214 V1086.7 H2075 V1080.0 L2065.8,1030.2 L2075,1010.0 Z" fill="#d8e2ea" stroke="#4a4a4a" stroke-width="1.9" stroke-linejoin="miter"/>
<text x="2081.9" y="1075.8" font-size="20.5" fill="#333" textLength="126.1" lengthAdjust="spacingAndGlyphs">Design: 51.01 t</text>
<path d="M2075,1013.1 H2293.5 V1050.4 H2075 V1055.0 L2065.8,1030.2 L2075,1005.5 Z" fill="#d8e2ea" stroke="#4a4a4a" stroke-width="1.9" stroke-linejoin="miter"/>
<path d="M2075,1005.5 L2065.8,1030.2 L2075,1055.0" fill="#fff" stroke="#4a4a4a" stroke-width="1.9"/>
<text x="2081.9" y="1038.6" font-size="20.5" fill="#333" textLength="206.0" lengthAdjust="spacingAndGlyphs">Adjusted design: 51.01 t</text>
<path d="M2075,1404.7 H2256 V1450 H2075 V1448.0 L2065.8,1459.7 L2075,1415.0 Z" fill="#d8e2ea" stroke="#4a4a4a" stroke-width="1.9" stroke-linejoin="miter"/>
<text x="2081.9" y="1430.2" font-size="20.5" fill="#333" textLength="167.8" lengthAdjust="spacingAndGlyphs">Actual: 0.195 kg/m³</text>
<path d="M2075,1475 H2260 V1516.5 H2075 V1510.0 L2065.8,1459.7 L2075,1440.0 Z" fill="#d8e2ea" stroke="#4a4a4a" stroke-width="1.9" stroke-linejoin="miter"/>
<text x="2081.9" y="1504.7" font-size="20.5" fill="#333" textLength="171.8" lengthAdjust="spacingAndGlyphs">Design: 0.179 kg/m³</text>
<path d="M2075,1442 H2338.5 V1479 H2075 V1486.0 L2065.8,1459.7 L2075,1434.0 Z" fill="#d8e2ea" stroke="#4a4a4a" stroke-width="1.9" stroke-linejoin="miter"/>
<path d="M2075,1434.0 L2065.8,1459.7 L2075,1486.0" fill="#fff" stroke="#4a4a4a" stroke-width="1.9"/>
<text x="2081.9" y="1467.5" font-size="20.5" fill="#333" textLength="250.4" lengthAdjust="spacingAndGlyphs">Adjusted design: 0.179 kg/m³</text>
<defs><filter id="sh" x="-30%" y="-30%" width="160%" height="160%"><feGaussianBlur in="SourceAlpha" stdDeviation="3"/><feOffset dx="2" dy="4"/><feComponentTransfer><feFuncA type="linear" slope="0.35"/></feComponentTransfer><feMerge><feMergeNode/><feMergeNode in="SourceGraphic"/></feMerge></filter></defs>
<path d="M2041,484 C2010,466 1975,430 1912.5,417.8 A66.8,66.8 0 0 0 1840.7,484.6 A66.8,66.8 0 0 0 1912.5,551.4 C1975,539 2010,502 2041,484 Z" fill="#0393d2" filter="url(#sh)"/>
<path d="M1927.7,458.5 V511.4 H1921 V470.4 Q1915,475 1907.9,477.6 V471 Q1918,467 1923.2,458.5 Z" fill="#fff"/>
</svg>
</body></html>
